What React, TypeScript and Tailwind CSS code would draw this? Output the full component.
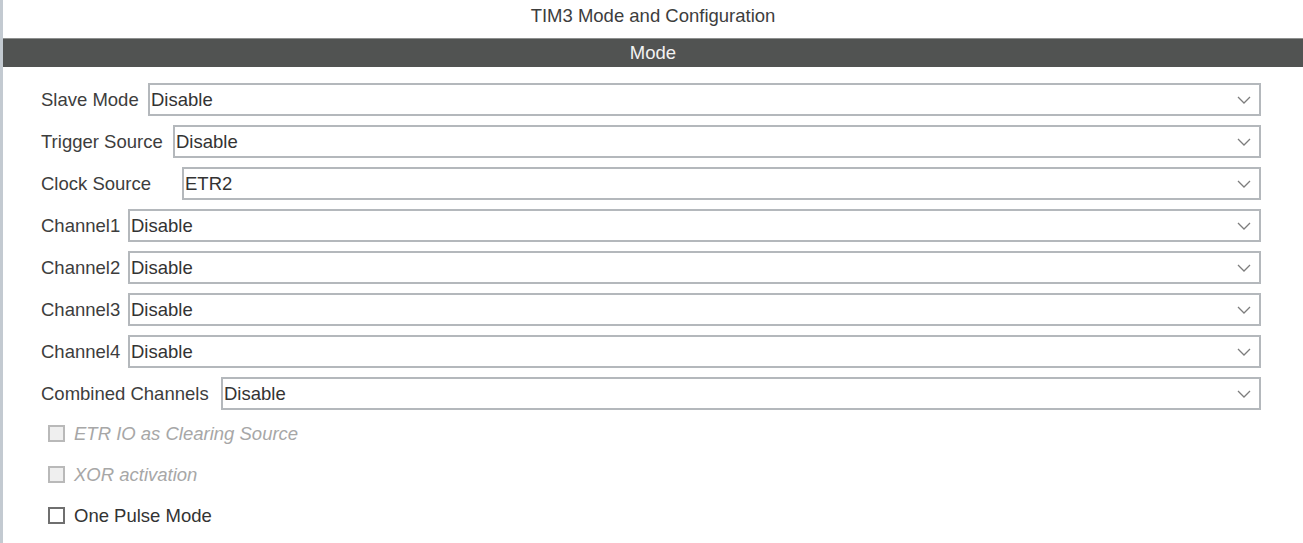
type Row = { label: string; value: string; labelW: string };

const rows: Row[] = [
  { label: "Slave Mode", value: "Disable", labelW: "w-[107px]" },
  { label: "Trigger Source", value: "Disable", labelW: "w-[132px]" },
  { label: "Clock Source", value: "ETR2", labelW: "w-[141px]" },
  { label: "Channel1", value: "Disable", labelW: "w-[87px]" },
  { label: "Channel2", value: "Disable", labelW: "w-[87px]" },
  { label: "Channel3", value: "Disable", labelW: "w-[87px]" },
  { label: "Channel4", value: "Disable", labelW: "w-[87px]" },
  { label: "Combined Channels", value: "Disable", labelW: "w-[180px]" },
];

function SelectRow({ label, value, labelW }: Row) {
  return (
    <div className="flex items-center h-[33px]">
      <span className={`${labelW} shrink-0 whitespace-nowrap text-[#3d3d3d]`}>
        {label}
      </span>
      <div className="flex-1 h-[33px] flex items-center justify-between border-2 border-[#b4b8bc] pl-[1px] pr-[8px] bg-white">
        <span className="text-[#333333]">{value}</span>
        {/* thin caret, lucide's chevron is too heavy here */}
        <svg width="14" height="8" viewBox="0 0 14 8" fill="none">
          <polyline points="1,1 7,7 13,1" stroke="#7d7d7d" strokeWidth="1.3" />
        </svg>
      </div>
    </div>
  );
}

function Check({ label, disabled }: { label: string; disabled?: boolean }) {
  return (
    <div className="flex items-center h-[41px] pl-[7px]">
      <div
        className={
          disabled
            ? "w-[17px] h-[17px] border-2 border-[#b9b9b9] bg-[#efefef]"
            : "w-[17px] h-[17px] border-2 border-[#6f6f6f] bg-white"
        }
      />
      <span
        className={
          disabled
            ? "ml-[9px] italic text-[#a7a7a7]"
            : "ml-[9px] text-[#333333]"
        }
      >
        {label}
      </span>
    </div>
  );
}

export default function App() {
  return (
    <div
      className="w-[1303px] h-[543px] bg-white border-l-[3px] border-[#c3cad1] text-[18.5px] overflow-hidden"
      style={{ fontFamily: '"Liberation Sans", Arial, sans-serif' }}
    >
      <div className="h-[38px] flex justify-center">
        <span className="leading-[32px] text-[#3d3d3d]">
          TIM3 Mode and Configuration
        </span>
      </div>
      <div className="h-[29px] bg-[#515352] border-t border-[#8d8f8e] flex items-center justify-center text-[#f2f2f2] leading-none">
        Mode
      </div>
      <div className="flex flex-col gap-[9px] pt-[16px] pl-[38px] pr-[42px]">
        {rows.map((r) => (
          <SelectRow key={r.label} {...r} />
        ))}
      </div>
      <div className="flex flex-col pl-[38px] mt-[3px]">
        <Check label="ETR IO as Clearing Source" disabled />
        <Check label="XOR activation" disabled />
        <Check label="One Pulse Mode" />
      </div>
    </div>
  );
}
